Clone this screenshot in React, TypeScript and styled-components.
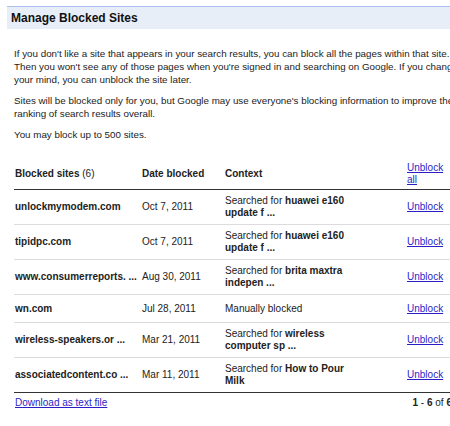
import React from "react";
import styled, { createGlobalStyle } from "styled-components";

const GlobalStyle = createGlobalStyle`
  html, body {
    margin: 0;
    padding: 0;
    background: #fff;
    overflow: hidden;
  }
  body {
    font-family: "Liberation Sans", Arial, sans-serif;
    color: #222;
  }
`;

const Page = styled.div`
  width: 470px;
  padding: 6px 0 0 7px;
`;

const Header = styled.div`
  background: #e8eef8;
  border-top: 1px solid #a9c0ee;
  height: 22px;
  line-height: 22px;
  padding-left: 4px;
  font-size: 12px;
  font-weight: bold;
  color: #111;
`;

const Content = styled.div`
  padding: 18px 0 0 7px;
  font-size: 10px;
`;

const Para = styled.p`
  margin: 0 0 8px;
  font-size: 9.8px;
  line-height: 13px;
  white-space: nowrap;
`;

const Table = styled.div`
  width: 438px;
  margin-top: 19px;
`;

const Row = styled.div<{ $head?: boolean; $last?: boolean }>`
  display: grid;
  grid-template-columns: 127px 83px 182px 1fr;
  align-items: center;
  box-sizing: border-box;
  min-height: 28px;
  padding: ${({ $head }) => ($head ? "2px 0 3px" : "5px 0")};
  line-height: 12px;
  border-bottom: 1px solid
    ${({ $head, $last }) => ($head || $last ? "#333" : "#dcdcdc")};
`;

const Cell = styled.div<{ $bold?: boolean }>`
  padding-left: 1px;
  font-weight: ${({ $bold }) => ($bold ? "bold" : "normal")};
  white-space: nowrap;
`;

const HeadCell = styled(Cell)`
  font-weight: bold;
`;

const Light = styled.span`
  font-weight: normal;
`;

const Query = styled.b`
  font-weight: bold;
`;

const Link = styled.a`
  color: #2a1fc6;
  text-decoration: underline;
  cursor: pointer;
`;

const Footer = styled.div`
  display: flex;
  justify-content: space-between;
  margin-top: 4px;
  line-height: 12px;
  padding-left: 1px;
`;

const Count = styled.div`
  font-weight: normal;
  b {
    font-weight: bold;
  }
`;

type Site = {
  site: string;
  date: string;
  query?: [string, string];
};

const sites: Site[] = [
  { site: "unlockmymodem.com", date: "Oct 7, 2011", query: ["huawei e160", "update f ..."] },
  { site: "tipidpc.com", date: "Oct 7, 2011", query: ["huawei e160", "update f ..."] },
  { site: "www.consumerreports. ...", date: "Aug 30, 2011", query: ["brita maxtra", "indepen ..."] },
  { site: "wn.com", date: "Jul 28, 2011" },
  { site: "wireless-speakers.or ...", date: "Mar 21, 2011", query: ["wireless", "computer sp ..."] },
  { site: "associatedcontent.co ...", date: "Mar 11, 2011", query: ["How to Pour", "Milk"] },
];

const App: React.FC = () => {
  return (
    <Page>
      <GlobalStyle />
      <Header>Manage Blocked Sites</Header>
      <Content>
        <Para>
          If you don't like a site that appears in your search results, you can block all the pages within that site.
          <br />
          Then you won't see any of those pages when you're signed in and searching on Google. If you change
          <br />
          your mind, you can unblock the site later.
        </Para>
        <Para>
          Sites will be blocked only for you, but Google may use everyone's blocking information to improve the
          <br />
          ranking of search results overall.
        </Para>
        <Para>You may block up to 500 sites.</Para>

        <Table>
          <Row $head>
            <HeadCell>
              Blocked sites <Light>(6)</Light>
            </HeadCell>
            <HeadCell>Date blocked</HeadCell>
            <HeadCell>Context</HeadCell>
            <Cell>
              <Link>
                Unblock
                <br />
                all
              </Link>
            </Cell>
          </Row>
          {sites.map((s, i) => (
            <Row key={s.site} $last={i === sites.length - 1}>
              <Cell $bold>{s.site}</Cell>
              <Cell>{s.date}</Cell>
              <Cell>
                {s.query ? (
                  <>
                    Searched for <Query>{s.query[0]}</Query>
                    <br />
                    <Query>{s.query[1]}</Query>
                  </>
                ) : (
                  "Manually blocked"
                )}
              </Cell>
              <Cell>
                <Link>Unblock</Link>
              </Cell>
            </Row>
          ))}
          <Footer>
            <Link>Download as text file</Link>
            <Count>
              <b>1</b> - <b>6</b> of <b>6</b>
            </Count>
          </Footer>
        </Table>
      </Content>
    </Page>
  );
};

export default App;
